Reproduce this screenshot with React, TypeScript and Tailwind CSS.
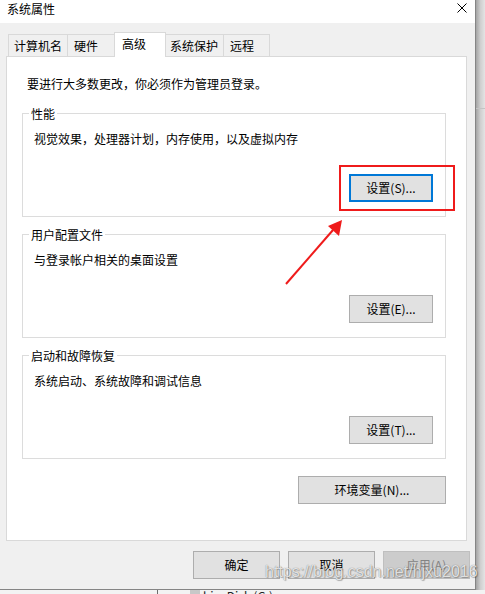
import type { ReactNode } from 'react'

type BtnProps = {
  children: ReactNode
  focused?: boolean
  disabled?: boolean
  width?: string
}

function Btn({ children, focused, disabled, width = 'w-[84px]' }: BtnProps) {
  let look = 'border border-[#adadad] bg-[#e1e1e1] text-black'
  if (focused) look = 'border-2 border-[#0078d7] bg-[#e1e1e1] text-black'
  if (disabled) look = 'border border-[#bfbfbf] bg-[#cccccc] text-[#838383]'
  return (
    <button
      type="button"
      disabled={disabled}
      className={`flex h-[28px] ${width} items-center justify-center leading-[16px] ${look}`}
    >
      {children}
    </button>
  )
}

type GroupProps = {
  title: string
  desc: string
  action: string
  focused?: boolean
  className?: string
}

function Group({ title, desc, action, focused, className = '' }: GroupProps) {
  return (
    <fieldset className={`w-[424px] border border-[#dcdcdc] pb-[14px] ${className}`}>
      <legend className="ml-[6px] px-[2px] leading-[17px]">{title}</legend>
      <p className="mt-[9px] pl-[11px] leading-[16px]">{desc}</p>
      <div className="mt-[27px] flex justify-end pr-[12px]">
        <Btn focused={focused}>{action}</Btn>
      </div>
    </fieldset>
  )
}

const TABS = [
  { label: '计算机名', cls: 'w-[59px] border-l pl-[5px]' },
  { label: '硬件', cls: 'w-[47px] border-l pl-[6px]' },
  { label: '高级', cls: 'w-[52px] border-x pl-[7px]', active: true },
  { label: '系统保护', cls: 'w-[57px] pl-[4px]' },
  { label: '远程', cls: 'w-[47px] border-x pl-[6px]' },
]

function TabStrip() {
  return (
    <div className="flex h-[33px] items-end pl-[8px]">
      {TABS.map((t) =>
        t.active ? (
          <div
            key={t.label}
            className={`relative z-10 -mb-px flex h-[25px] items-center border-t border-[#d9d9d9] bg-white pb-[2px] leading-[16px] ${t.cls}`}
          >
            {t.label}
          </div>
        ) : (
          <div
            key={t.label}
            className={`flex h-[22px] items-center border-t border-[#d9d9d9] bg-[#f0f0f0] leading-[16px] ${t.cls}`}
          >
            {t.label}
          </div>
        )
      )}
    </div>
  )
}

export default function App() {
  return (
    <div className="relative h-[594px] w-[485px] overflow-hidden bg-[#eeeeee] font-['Noto_Sans_CJK_SC','Noto_Sans',sans-serif] text-[12px] text-black">
      <div className="flex h-[590px]">
        {/* 对话框 */}
        <div className="flex w-[476px] flex-col border-r border-b border-[#858585] bg-[#f0f0f0]">
          <div className="flex h-[23px] items-start justify-between bg-white">
            <span className="pl-[7px] pt-[1px] leading-[16px]">系统属性</span>
            <svg className="mr-[8px] mt-[3px]" width="10" height="10" viewBox="0 0 10 10">
              <path d="M0.5 0.5 9.5 9.5M9.5 0.5 0.5 9.5" stroke="#000" strokeWidth="1" fill="none" />
            </svg>
          </div>

          <TabStrip />

          <div className="ml-[6px] h-[485px] w-[461px] border border-[#d9d9d9] bg-white">
            <div className="flex flex-col pl-[15px] pt-[19px]">
              <p className="pl-[5px] leading-[16px]">要进行大多数更改，你必须作为管理员登录。</p>
              <Group
                className="mt-[13px]"
                title="性能"
                desc="视觉效果，处理器计划，内存使用，以及虚拟内存"
                action="设置(S)..."
                focused
              />
              <Group
                className="mt-[9px]"
                title="用户配置文件"
                desc="与登录帐户相关的桌面设置"
                action="设置(E)..."
              />
              <Group
                className="mt-[9px]"
                title="启动和故障恢复"
                desc="系统启动、系统故障和调试信息"
                action="设置(T)..."
              />
              <div className="mt-[17px] flex w-[424px] justify-end">
                <Btn width="w-[148px]">环境变量(N)...</Btn>
              </div>
            </div>
          </div>

          <div className="mt-[10px] flex justify-end gap-[8px] pr-[5px]">
            <Btn width="w-[87px]">确定</Btn>
            <Btn width="w-[87px]">取消</Btn>
            <Btn width="w-[87px]" disabled>
              应用(A)
            </Btn>
          </div>
        </div>

        {/* 窗口阴影 */}
        <div className="flex-1 bg-linear-to-r from-[#a4a4a4] via-[#cfcfcf] to-[#e4e4e4]">
          <div className="h-[109px] border-b border-[#c4c4c4]" />
        </div>
      </div>

      {/* 后面的资源管理器窗口 */}
      <div className="flex h-[4px] bg-[#f3f3f3]">
        <div className="ml-[157px] w-[33px] border-l border-[#6d6d6d]" />
        <div className="h-[4px] w-[10px] bg-[#c8c8c8]" />
        <span className="ml-[3px] leading-[12px] text-[#222]">hjxuDisk (G:)</span>
      </div>

      {/* 标注 */}
      <div className="pointer-events-none absolute left-[339px] top-[165px] h-[46px] w-[116px] border-2 border-[#ef1b1b]" />
      <svg className="pointer-events-none absolute left-0 top-0" width="485" height="594">
        <line x1="286" y1="284" x2="333" y2="230" stroke="#ef1b1b" strokeWidth="2" />
        <polygon points="342,220 328,226 339,236" fill="#ef1b1b" />
      </svg>

      <span className="pointer-events-none absolute left-[265px] top-[563px] font-['Liberation_Sans',Arial,sans-serif] text-[16px] leading-[18px] text-white/80 [text-shadow:0_0_1px_rgba(0,0,0,0.55),1px_1px_1px_rgba(0,0,0,0.25)]">
        https://blog.csdn.net/hjxu2016
      </span>
    </div>
  )
}
